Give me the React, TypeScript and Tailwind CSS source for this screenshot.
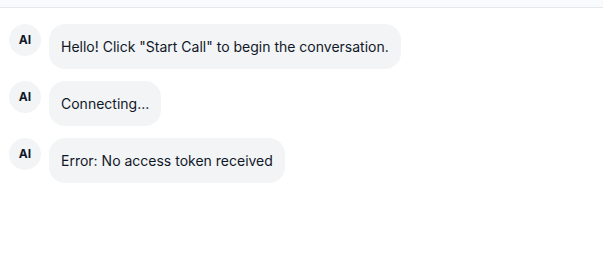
const messages = [
  'Hello! Click "Start Call" to begin the conversation.',
  'Connecting...',
  'Error: No access token received',
];

export default function App() {
  return (
    <div className="h-[258px] w-full bg-white font-['Inter',sans-serif] overflow-hidden">
      <div className="h-2 bg-gray-50 border-b border-gray-200" />
      <div className="flex flex-col gap-3 pt-4 pl-[9px]">
        {messages.map((m, i) => (
          <div key={i} className="flex items-start gap-2">
            <div className="w-8 h-8 rounded-full bg-gray-100 flex items-center justify-center shrink-0 text-xs font-bold text-gray-900">
              AI
            </div>
            <div className="bg-gray-100 rounded-2xl px-3 py-3 text-sm leading-[21px] text-gray-900">
              {m}
            </div>
          </div>
        ))}
      </div>
    </div>
  );
}
